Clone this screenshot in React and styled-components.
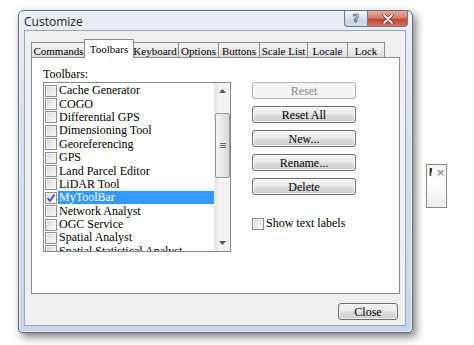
import React from "react";
import styled, { createGlobalStyle } from "styled-components";

const tabs = [
  { label: "Commands", width: 55 },
  { label: "Toolbars", width: 46, active: true },
  { label: "Keyboard", width: 47 },
  { label: "Options", width: 40 },
  { label: "Buttons", width: 41 },
  { label: "Scale List", width: 48 },
  { label: "Locale", width: 40 },
  { label: "Lock", width: 37 },
];

const toolbars = [
  { label: "Cache Generator" },
  { label: "COGO" },
  { label: "Differential GPS" },
  { label: "Dimensioning Tool" },
  { label: "Georeferencing" },
  { label: "GPS" },
  { label: "Land Parcel Editor" },
  { label: "LiDAR Tool" },
  { label: "MyToolBar", checked: true, selected: true },
  { label: "Network Analyst" },
  { label: "OGC Service" },
  { label: "Spatial Analyst" },
  { label: "Spatial Statistical Analyst" },
];

const actions = [
  { label: "Reset", disabled: true },
  { label: "Reset All" },
  { label: "New..." },
  { label: "Rename..." },
  { label: "Delete" },
];

const GlobalStyle = createGlobalStyle`
  html, body {
    margin: 0;
    background: #ffffff;
  }
  body {
    font-family: "Liberation Serif", "DejaVu Serif", serif;
    font-size: 12px;
    color: #000;
  }
`;

const Check = ({ checked }) => (
  <CheckBox>
    {checked && (
      <svg width="10" height="10" viewBox="0 0 10 10">
        <path d="M1.5 5 L4 8 L8.5 1.5" fill="none" stroke="#2a4fa8" strokeWidth="1.6" />
      </svg>
    )}
  </CheckBox>
);

const App = () => {
  return (
    <Desktop>
      <GlobalStyle />
      <Window>
        <TitleBar>
          <Title>Customize</Title>
          <Captions>
            <HelpButton>?</HelpButton>
            <CloseCaption>
              <svg width="12" height="10" viewBox="0 0 12 10">
                <path
                  d="M2 1 L10 9 M10 1 L2 9"
                  stroke="#5a2a22"
                  strokeWidth="3.4"
                  strokeLinecap="round"
                />
                <path d="M2 1 L10 9 M10 1 L2 9" stroke="#ffffff" strokeWidth="1.8" strokeLinecap="round" />
              </svg>
            </CloseCaption>
          </Captions>
        </TitleBar>

        <Client>
          <TabRow>
            {tabs.map((tab) => (
              <Tab key={tab.label} $active={tab.active} $width={tab.width}>
                {tab.label}
              </Tab>
            ))}
          </TabRow>

          <Panel>
            <ListLabel>Toolbars:</ListLabel>
            <ListBox>
              <Items>
                {toolbars.map((item) => (
                  <Item key={item.label}>
                    <Check checked={item.checked} />
                    <ItemText $selected={item.selected}>{item.label}</ItemText>
                  </Item>
                ))}
              </Items>
              <ScrollBar>
                <Arrow>
                  <svg width="7" height="4" viewBox="0 0 7 4">
                    <path d="M0 4 L3.5 0 L7 4 Z" fill="#555" />
                  </svg>
                </Arrow>
                <Thumb>
                  <Grip />
                </Thumb>
                <Track />
                <Arrow>
                  <svg width="7" height="4" viewBox="0 0 7 4">
                    <path d="M0 0 L3.5 4 L7 0 Z" fill="#555" />
                  </svg>
                </Arrow>
              </ScrollBar>
            </ListBox>

            <Actions>
              {actions.map((action) => (
                <Button key={action.label} disabled={action.disabled}>
                  {action.label}
                </Button>
              ))}
              <OptionRow>
                <Check />
                <span>Show text labels</span>
              </OptionRow>
            </Actions>
          </Panel>

          <Footer>
            <Button $width={60}>Close</Button>
          </Footer>
        </Client>
      </Window>

      <FloatingBar>
        <FloatingHead>
          <FloatingName>M</FloatingName>
          <FloatingClose>×</FloatingClose>
        </FloatingHead>
      </FloatingBar>
    </Desktop>
  );
};

export default App;

const Desktop = styled.div`
  display: flex;
  align-items: flex-start;
  padding: 10px 0 0 18px;
  width: 474px;
  height: 345px;
  box-sizing: border-box;
  overflow: hidden;
`;

const Window = styled.div`
  width: 395px;
  height: 323px;
  box-sizing: border-box;
  display: flex;
  flex-direction: column;
  border: 1px solid #5f6b78;
  border-radius: 6px 6px 4px 4px;
  background: linear-gradient(180deg, #e9eff7 0%, #d4e0ee 40%, #c6d7ea 100%);
  box-shadow: 3px 4px 9px rgba(0, 0, 0, 0.5), inset 0 0 0 1px rgba(255, 255, 255, 0.7);
`;

const TitleBar = styled.div`
  height: 19px;
  display: flex;
  align-items: flex-start;
`;

const Title = styled.div`
  padding: 3px 0 0 5px;
  font-family: "Open Sans", "Noto Sans", sans-serif;
  font-size: 12px;
  line-height: 16px;
  color: #222;
`;

const Captions = styled.div`
  margin-left: auto;
  margin-right: 4px;
  display: flex;
`;

const CaptionButton = styled.div`
  height: 16px;
  box-sizing: border-box;
  display: flex;
  align-items: center;
  justify-content: center;
  border: 1px solid #6d7a88;
  border-top: none;
`;

const HelpButton = styled(CaptionButton)`
  width: 23px;
  border-right: none;
  border-radius: 0 0 0 4px;
  background: linear-gradient(180deg, #eef3f9 0%, #dbe4ef 50%, #c8d4e3 51%, #d3deeb 100%);
  font-family: "DejaVu Sans", sans-serif;
  font-weight: bold;
  font-size: 11px;
  color: #e8eef5;
  -webkit-text-stroke: 0.8px #5b6673;
`;

const CloseCaption = styled(CaptionButton)`
  width: 41px;
  border-radius: 0 0 4px 0;
  background: linear-gradient(180deg, #e9a99b 0%, #d9806d 45%, #c3442e 55%, #d5705a 100%);
`;

const Client = styled.div`
  flex: 1;
  margin: 0 6px 6px 5px;
  padding: 8px 5px 0 6px;
  background: #f0f0f0;
  border: 1px solid #9aa6b3;
  display: flex;
  flex-direction: column;
`;

const TabRow = styled.div`
  display: flex;
  align-items: flex-end;
  height: 18px;
`;

const Tab = styled.div`
  position: relative;
  width: ${(p) => (p.$active ? p.$width + 4 : p.$width)}px;
  height: ${(p) => (p.$active ? 19 : 15)}px;
  margin: 0 ${(p) => (p.$active ? -2 : 0)}px ${(p) => (p.$active ? -1 : 0)}px;
  z-index: ${(p) => (p.$active ? 1 : 0)};
  box-sizing: border-box;
  display: flex;
  align-items: center;
  justify-content: center;
  padding-top: ${(p) => (p.$active ? 0 : 1)}px;
  border: 1px solid #898c95;
  border-bottom: none;
  border-left-width: ${(p) => (p.$active ? 1 : 0)}px;
  background: ${(p) =>
    p.$active ? "#ffffff" : "linear-gradient(180deg, #f5f5f5 0%, #ebebeb 50%, #dddddd 100%)"};
  font-size: 11px;
  white-space: nowrap;

  &:first-child {
    border-left-width: 1px;
  }
`;

const Panel = styled.div`
  width: 369px;
  height: 237px;
  box-sizing: border-box;
  border: 1px solid #898c95;
  background: #ffffff;
  padding: 9px 0 0 11px;
  display: grid;
  grid-template-columns: 188px 104px;
  grid-template-rows: 15px 170px;
  column-gap: 21px;
  row-gap: 0;
`;

const ListLabel = styled.div`
  grid-column: 1 / 2;
  line-height: 14px;
`;

const ListBox = styled.div`
  grid-row: 2;
  grid-column: 1;
  box-sizing: border-box;
  border: 1px solid #828790;
  display: flex;
  overflow: hidden;
`;

const Items = styled.div`
  flex: 1;
  padding-top: 1px;
  overflow: hidden;
`;

const Item = styled.div`
  height: 13.4px;
  display: flex;
  align-items: center;
  padding-left: 1px;
  gap: 1px;
  white-space: nowrap;
`;

const ItemText = styled.span`
  flex: 1;
  line-height: 13px;
  padding-left: 1px;
  background: ${(p) => (p.$selected ? "#3399ff" : "transparent")};
  color: ${(p) => (p.$selected ? "#ffffff" : "#000000")};
`;

const CheckBox = styled.span`
  width: 12px;
  height: 12px;
  flex: none;
  box-sizing: border-box;
  border: 1px solid #8e8f8f;
  background: linear-gradient(135deg, #d6d6d6 0%, #eeeeee 60%, #fbfbfb 100%);
  box-shadow: inset 0 0 0 1px #f4f4f4;
  display: flex;
  align-items: center;
  justify-content: center;
`;

const ScrollBar = styled.div`
  width: 15px;
  flex: none;
  display: flex;
  flex-direction: column;
  background: linear-gradient(90deg, #e3e3e3 0%, #f2f2f2 30%, #f2f2f2 100%);
  border-left: 1px solid #ececec;
`;

const Arrow = styled.div`
  height: 16px;
  display: flex;
  align-items: center;
  justify-content: center;
`;

const Thumb = styled.div`
  height: 65px;
  margin-top: 14px;
  box-sizing: border-box;
  border: 1px solid #979797;
  border-radius: 2px;
  background: linear-gradient(90deg, #f3f3f3 0%, #e8e8e8 50%, #d6d6d6 100%);
  display: flex;
  align-items: center;
  justify-content: center;
`;

const Grip = styled.div`
  width: 6px;
  height: 5px;
  background: repeating-linear-gradient(180deg, #6b6b6b 0 1px, transparent 1px 2px);
`;

const Track = styled.div`
  flex: 1;
`;

const Actions = styled.div`
  grid-row: 2;
  grid-column: 2;
  display: flex;
  flex-direction: column;
  gap: 7px;
`;

const Button = styled.button`
  width: ${(p) => p.$width || 104}px;
  height: 17px;
  padding: 0;
  box-sizing: border-box;
  font-family: "Liberation Serif", "DejaVu Serif", serif;
  font-size: 12px;
  line-height: 14px;
  color: #000;
  border: 1px solid #707070;
  border-radius: 3px;
  background: linear-gradient(180deg, #f4f4f4 0%, #ebebeb 48%, #dddddd 52%, #cfcfcf 100%);
  box-shadow: inset 0 0 0 1px rgba(255, 255, 255, 0.7);

  &:disabled {
    color: #8c8c8c;
    border-color: #adb2b5;
    background: #f4f4f4;
    box-shadow: none;
  }
`;

const OptionRow = styled.div`
  margin-top: 14px;
  display: flex;
  align-items: center;
  gap: 2px;
  white-space: nowrap;
`;

const Footer = styled.div`
  display: flex;
  justify-content: flex-end;
  padding: 9px 2px 0 0;
`;

const FloatingBar = styled.div`
  margin: 154px 0 0 13px;
  width: 21px;
  height: 44px;
  box-sizing: border-box;
  border: 1px solid #8a8a8a;
  background: linear-gradient(180deg, #f7f7f7 0%, #ffffff 40%, #eeeeee 100%);
`;

const FloatingHead = styled.div`
  height: 14px;
  display: flex;
  align-items: center;
  padding-left: 2px;
  overflow: hidden;
`;

const FloatingName = styled.span`
  width: 3px;
  overflow: hidden;
  font-family: "Liberation Sans", sans-serif;
  font-weight: bold;
  font-size: 10px;
  color: #222;
`;

const FloatingClose = styled.span`
  margin-left: 4px;
  font-family: "DejaVu Sans", sans-serif;
  font-size: 11px;
  color: #777;
  line-height: 11px;
`;
